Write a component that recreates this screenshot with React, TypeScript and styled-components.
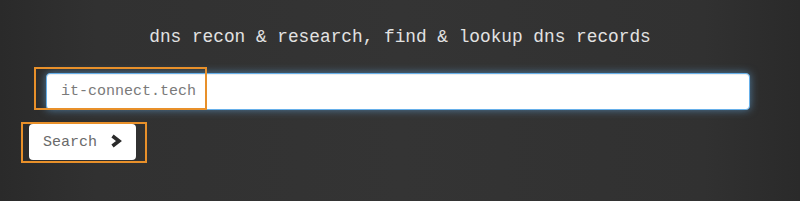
import React from 'react';
import styled, { createGlobalStyle } from 'styled-components';

const GlobalStyle = createGlobalStyle`
  html, body {
    margin: 0;
    padding: 0;
    height: 100%;
  }

  body {
    background: linear-gradient(
      to right,
      #2a2a2a 0%,
      #313131 12%,
      #343434 50%,
      #313131 88%,
      #2a2a2a 100%
    );
    font-family: "Liberation Mono", "Courier New", monospace;
    overflow: hidden;
  }
`;

const Page = styled.main`
  width: 800px;
  height: 201px;
  padding-top: 26px;
  box-sizing: border-box;
`;

const Tagline = styled.h1`
  margin: 0 0 25px;
  font-size: 17.8px;
  font-weight: normal;
  line-height: 22px;
  color: #e2e2e2;
  text-align: center;
`;

const Form = styled.form`
  display: flex;
  flex-direction: column;
  gap: 17px;
`;

const InputRow = styled.div`
  position: relative;
  margin: 0 50px 0 46px;
`;

const QueryInput = styled.input`
  display: block;
  width: 100%;
  height: 37px;
  box-sizing: border-box;
  padding: 0 14px;
  border: 1px solid #66afe9;
  border-radius: 4px;
  background: #ffffff;
  box-shadow: 0 0 8px rgba(102, 175, 233, 0.6), inset 0 1px 1px rgba(0, 0, 0, 0.075);
  font-family: "Liberation Mono", "Courier New", monospace;
  font-size: 15px;
  color: #7a7a7a;
  outline: none;
  caret-color: #333;
`;

const ButtonRow = styled.div`
  position: relative;
  align-self: flex-start;
  margin-left: 29px;
  margin-top: -3px;
`;

const SearchButton = styled.button`
  display: flex;
  align-items: center;
  gap: 13px;
  width: 107px;
  height: 36px;
  box-sizing: border-box;
  padding: 0 0 0 14px;
  border: none;
  border-radius: 4px;
  background: #ffffff;
  font-family: "Liberation Mono", "Courier New", monospace;
  font-size: 15px;
  color: #6a6a6a;
  cursor: pointer;

  svg {
    width: 12px;
    height: 14px;
    margin-top: -2px;
  }
`;

// chunky FA4-style chevron
const Chevron: React.FC = () => (
  <svg viewBox="0 0 12 14" aria-hidden="true">
    <polyline
      points="2.5,2 9,7 2.5,12"
      fill="none"
      stroke="#2b2b2b"
      strokeWidth="3.6"
      strokeLinejoin="miter"
    />
  </svg>
);

const Highlight = styled.span<{ $left: number; $top: number; $width: number; $height: number }>`
  position: absolute;
  left: ${(p) => p.$left}px;
  top: ${(p) => p.$top}px;
  width: ${(p) => p.$width}px;
  height: ${(p) => p.$height}px;
  box-sizing: border-box;
  border: 2px solid #e8902a;
  pointer-events: none;
`;

const App: React.FC = () => {
  return (
    <>
      <GlobalStyle />
      <Page>
        <Tagline>dns recon &amp; research, find &amp; lookup dns records</Tagline>
        <Form onSubmit={(e) => e.preventDefault()}>
          <InputRow>
            <QueryInput type="text" defaultValue="it-connect.tech" autoFocus />
            <Highlight $left={-12} $top={-6} $width={173} $height={43} />
          </InputRow>
          <ButtonRow>
            <SearchButton type="submit">
              Search
              <Chevron />
            </SearchButton>
            <Highlight $left={-8} $top={-2} $width={126} $height={41} />
          </ButtonRow>
        </Form>
      </Page>
    </>
  );
};

export default App;
